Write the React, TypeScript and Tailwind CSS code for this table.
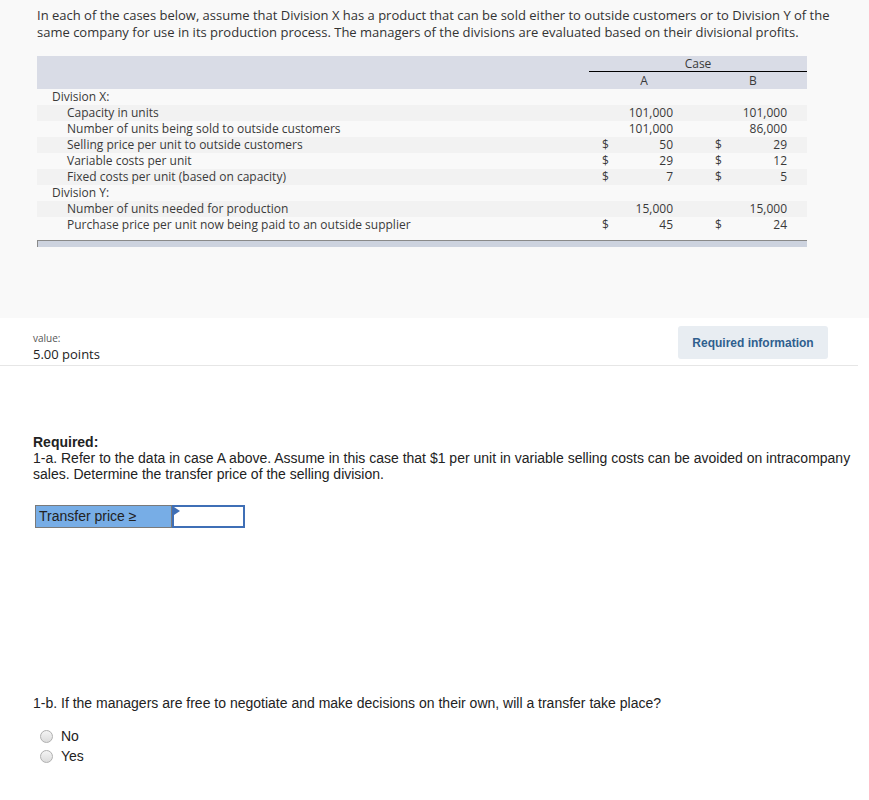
import React from 'react';

type Row = {
  label: string;
  sub?: boolean;
  a?: string;
  b?: string;
  dollar?: boolean;
  shade?: boolean;
};

const rows: Row[] = [
  { label: 'Division X:' },
  { label: 'Capacity in units', sub: true, a: '101,000', b: '101,000', shade: true },
  { label: 'Number of units being sold to outside customers', sub: true, a: '101,000', b: '86,000' },
  { label: 'Selling price per unit to outside customers', sub: true, a: '50', b: '29', dollar: true, shade: true },
  { label: 'Variable costs per unit', sub: true, a: '29', b: '12', dollar: true },
  { label: 'Fixed costs per unit (based on capacity)', sub: true, a: '7', b: '5', dollar: true, shade: true },
  { label: 'Division Y:' },
  { label: 'Number of units needed for production', sub: true, a: '15,000', b: '15,000', shade: true },
  { label: 'Purchase price per unit now being paid to an outside supplier', sub: true, a: '45', b: '24', dollar: true },
];

const sans = { fontFamily: '"Open Sans", "Liberation Sans", sans-serif' };

// Data table of the two cases
const CaseTable: React.FC = () => {
  return (
    <div className="ml-[37px] w-[770px] text-[12px] text-[#3a3a3a]" style={sans}>
      <div className="bg-[#d9dce6] h-[33px] grid grid-cols-[552px_110px_108px]">
        <div />
        <div className="col-span-2 h-[16px] leading-[16px] text-center border-b border-black">Case</div>
        <div />
        <div className="leading-[16px] text-center">A</div>
        <div className="leading-[16px] text-center">B</div>
      </div>
      {rows.map((r, i) => (
        <div
          key={i}
          className={`grid grid-cols-[552px_110px_108px] h-[16px] leading-[16px] ${r.shade ? 'bg-[#f2f2f2]' : ''}`}
        >
          <div className={r.sub ? 'pl-[30px]' : 'pl-[15px]'}>{r.label}</div>
          <div className="flex justify-between pl-[13px] pr-[26px]">
            <span>{r.dollar ? '$' : ''}</span>
            <span>{r.a}</span>
          </div>
          <div className="flex justify-between pl-[16px] pr-[20px]">
            <span>{r.dollar ? '$' : ''}</span>
            <span>{r.b}</span>
          </div>
        </div>
      ))}
      <div className="h-[7px]" />
      <div className="h-[7px] bg-[#cdd3df] border-t border-l border-[#8a8a8a]" />
    </div>
  );
};

const Radio: React.FC<{ label: string }> = ({ label }) => (
  <label className="flex items-center h-[20px]">
    <span className="w-[13px] h-[13px] rounded-full border border-[#b0b0b0] bg-gradient-to-b from-[#f4f4f4] to-[#dcdcdc] ml-[7px]" />
    <span className="ml-[8px] text-[14px] text-[#222]">{label}</span>
  </label>
);

const App: React.FC = () => {
  return (
    <div className="w-[869px] min-h-[800px] bg-white" style={{ fontFamily: '"Liberation Sans", Arial, sans-serif' }}>
      <div className="bg-[#f9f9f9] h-[318px] pt-[7px]">
        <p className="pl-[37px] pr-[24px] text-[13px] leading-[17px] text-[#333]" style={sans}>
          In each of the cases below, assume that Division X has a product that can be sold either to outside customers or to Division Y of the same company for use in its production process. The managers of the divisions are evaluated based on their divisional profits.
        </p>
        <div className="h-[15px]" />
        <CaseTable />
      </div>

      <div className="w-[858px] h-[48px] border-b border-[#e6e6e6] flex justify-between items-start">
        <div className="pl-[33px] pt-[14px]" style={sans}>
          <div className="text-[10px] leading-[12px] text-[#555]">value:</div>
          <div className="mt-[2px] text-[13px] leading-[16px] text-[#222]">5.00 points</div>
        </div>
        <button className="mt-[8px] mr-[30px] w-[150px] h-[33px] rounded-[3px] bg-[#e8edf2] text-[12px] font-semibold text-[#2f5f8e]">
          Required information
        </button>
      </div>

      <div className="pl-[33px] pr-[8px] pt-[68px] text-[14px] leading-[16px] text-[#222]">
        <div className="font-bold">Required:</div>
        <p>
          1-a. Refer to the data in case A above. Assume in this case that $1 per unit in variable selling costs can be avoided on intracompany sales. Determine the transfer price of the selling division.
        </p>

        <div className="mt-[23px] ml-[2px] flex h-[23px]">
          <div className="w-[137px] h-[23px] bg-[#77ade6] border border-[#7a7a7a] pl-[3px] leading-[21px] text-[#222]">
            Transfer price ≥
          </div>
          <div className="relative w-[73px] h-[23px] bg-white border-2 border-[#3f6fb6]">
            <span className="absolute left-0 top-0 w-0 h-0 border-t-[4px] border-b-[4px] border-l-[6px] border-t-transparent border-b-transparent border-l-[#3f6fb6]" />
          </div>
        </div>

        <p className="mt-[167px]">
          1-b. If the managers are free to negotiate and make decisions on their own, will a transfer take place?
        </p>
        <div className="mt-[15px]">
          <Radio label="No" />
          <Radio label="Yes" />
        </div>
      </div>
    </div>
  );
};

export default App;
